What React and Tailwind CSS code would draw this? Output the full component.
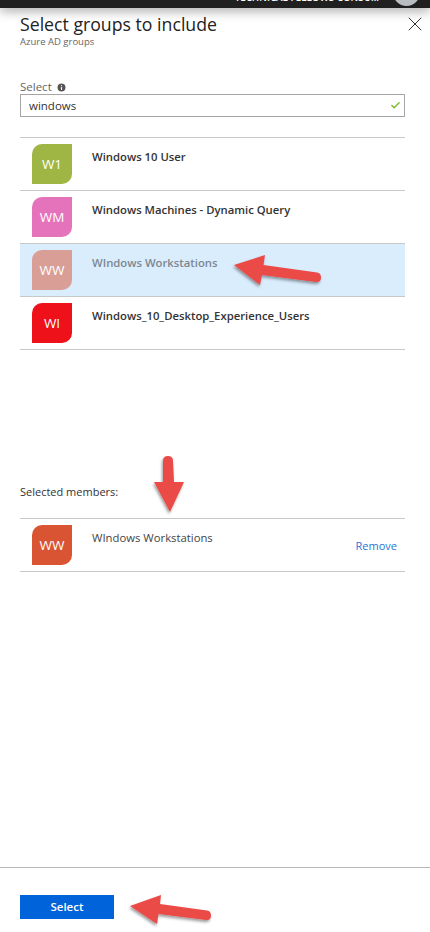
import React from "react";
import { Check, Info, X } from "lucide-react";

const groups = [
  { initials: "W1", name: "Windows 10 User", color: "bg-[#9fb644]" },
  { initials: "WM", name: "Windows Machines - Dynamic Query", color: "bg-[#e573bb]" },
  { initials: "WW", name: "WIndows Workstations", color: "bg-[#d99e96]", selected: true },
  { initials: "WI", name: "Windows_10_Desktop_Experience_Users", color: "bg-[#ee1119]" },
];

function Badge({ initials, color }) {
  return (
    <div className={`flex h-10 w-10 flex-none items-center justify-center rounded-tl-[10px] rounded-br-[10px] text-[13.500px] text-white ${color}`}>
      {initials}
    </div>
  );
}

function GroupRow({ group }) {
  return (
    <div className={`flex h-[53px] border-b border-[#c8c8c8] pl-3 pt-[6px] ${group.selected ? "bg-[#d9edfd]" : ""}`}>
      <Badge initials={group.initials} color={group.color} />
      <div className={`ml-5 mt-[5px] text-[11.300px] leading-[16px] font-semibold ${group.selected ? "text-[#7d8790]" : "text-[#333333]"}`}>
        {group.name}
      </div>
    </div>
  );
}

// the red annotation arrows drawn on top of the screenshot
function Arrows() {
  return (
    <svg className="pointer-events-none absolute inset-0" width="430" height="932">
      <defs>
        <filter id="arrowShadow" x="-20%" y="-20%" width="140%" height="140%">
          <feDropShadow dx="-1" dy="2" stdDeviation="1.6" floodColor="#000" floodOpacity="0.4" />
        </filter>
      </defs>
      <g fill="#ea4b47" filter="url(#arrowShadow)">
        <path d="M234 265 L265 255 L263.500 265 L317 272.500 Q321 273 321 277.500 Q321 282.500 316 282 L262 275 L260 285 Z" />
        <path d="M170 512 L154 482 L163 482 L163 461 Q163 456 168 456 Q173 456 173 461 L174 482 L184 482 Z" />
        <path d="M130 906 L161 895 L160 904 L207 910.500 Q211 911 211 915.500 Q211 920.500 206 920 L158.500 914 L157 924 Z" />
      </g>
    </svg>
  );
}

export default function App() {
  return (
    <div className="relative flex h-[932px] w-[430px] flex-col overflow-hidden bg-white font-['Open_Sans',sans-serif] text-[#333333]">
      <div className="relative h-[8px] flex-none overflow-hidden bg-[#202020] shadow-[0_2px_12px_rgba(0,0,0,0.45)]">
        <div className="absolute right-[51px] top-[-9px] text-[9.800px] leading-[14px] font-semibold whitespace-nowrap text-white">
          TECHNICAL FELLOWS CONSU...
        </div>
        <div className="absolute left-[393px] top-[-21px] h-[27px] w-[27px] rounded-full bg-[#b9bcc0]" />
      </div>

      <div className="flex items-start justify-between pl-5 pr-[3px] pt-[4px]">
        <div>
          <h1 className="text-[17.700px] leading-[24px] font-normal text-[#222222]">Select groups to include</h1>
          <p className="text-[9.500px] leading-[12px] text-[#666666]">Azure AD groups</p>
        </div>
        <X size={24} strokeWidth={1} className="text-[#333333]" />
      </div>

      <div className="mt-[32px] px-5 pr-[25px]">
        <div className="flex h-[14px] items-center gap-[4px] text-[11.500px] text-[#666666]">
          Select
          <Info size={11} fill="#555555" stroke="#ffffff" strokeWidth={2.500} />
        </div>
        <div className="flex h-[23px] items-center justify-between border border-[#a6a6a6] pl-2 pr-[3px] text-[11.500px] text-[#333333]">
          windows
          <Check size={11} strokeWidth={3} className="text-[#7fba2c]" />
        </div>
      </div>

      <div className="mt-[20px] ml-5 mr-[25px] border-t border-[#c8c8c8]">
        {groups.map((g) => (
          <GroupRow key={g.name} group={g} />
        ))}
      </div>

      <div className="ml-5 mt-[134px] text-[11px] leading-[15px] text-[#333333]">Selected members:</div>

      <div className="mt-[19px] ml-5 mr-[25px] flex h-[54px] border-y border-[#c8c8c8] pl-3 pt-[6px]">
        <Badge initials="WW" color="bg-[#d95433]" />
        <div className="ml-5 mt-[5px] text-[11.300px] leading-[16px] text-[#444444]">WIndows Workstations</div>
        <div className="ml-auto mr-[8px] mt-[13px] text-[11px] leading-[16px] text-[#1f74d6]">Remove</div>
      </div>

      <div className="mt-auto h-[65px] flex-none border-t border-[#b8b8b8] pl-5 pt-[25px]">
        <button className="h-6 w-[94px] bg-[#0063d9] text-[11.500px] font-semibold text-white">Select</button>
      </div>

      <Arrows />
    </div>
  );
}
